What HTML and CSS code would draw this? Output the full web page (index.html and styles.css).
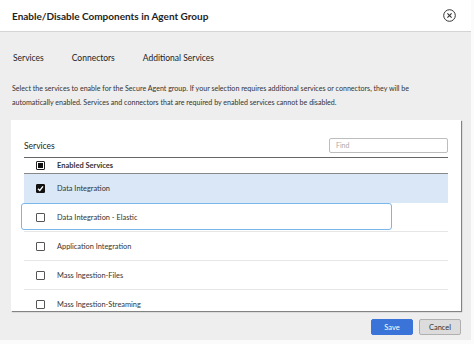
FILE: index.html
```html
<html>
	<head>
		<title>Enable/Disable Components</title>
		<link rel="stylesheet" href="styles.css">
	</head>
	<body>
		<div class="Dialog">
			<div class="Header">
				<span class="Title">Enable/Disable Components in Agent Group</span>
				<svg class="Close" width="13" height="13" viewBox="0 0 13 13">
					<circle cx="6.5" cy="6.5" r="5.8" fill="none" stroke="#333" stroke-width="1"/>
					<path d="M4.4 4.4 L8.6 8.6 M8.6 4.4 L4.4 8.6" stroke="#333" stroke-width="1.1"/>
				</svg>
			</div>

			<div class="Tabs">
				<span class="Tab">Services</span>
				<span class="Tab">Connectors</span>
				<span class="Tab">Additional Services</span>
			</div>

			<div class="Desc">
				Select the services to enable for the Secure Agent group. If your selection requires additional services or connectors, they will be
				automatically enabled. Services and connectors that are required by enabled services cannot be disabled.
			</div>

			<div class="Panel">
				<div class="Toolbar">
					<span class="Label">Services</span>
					<div class="Find">Find</div>
				</div>
				<div class="HeadRow">
					<span class="Check Partial"></span>
					<span>Enabled Services</span>
				</div>
				<div class="Row Selected">
					<span class="Check On">
						<svg width="7" height="7" viewBox="0 0 7 7"><path d="M1 3.8 L2.8 5.5 L6 1.4" fill="none" stroke="#fff" stroke-width="1.4"/></svg>
					</span>
					<span>Data Integration</span>
				</div>
				<div class="Row Focus">
					<span class="Check"></span>
					<span>Data Integration - Elastic</span>
				</div>
				<div class="Row">
					<span class="Check"></span>
					<span>Application Integration</span>
				</div>
				<div class="Row">
					<span class="Check"></span>
					<span>Mass Ingestion-Files</span>
				</div>
				<div class="Row">
					<span class="Check"></span>
					<span>Mass Ingestion-Streaming</span>
				</div>
			</div>

			<div class="Footer">
				<button class="Btn Save">Save</button>
				<button class="Btn Cancel">Cancel</button>
			</div>
		</div>
	</body>
</html>
```

FILE: styles.css
```css
html, body {margin: 0; height: 100%; overflow: hidden; background-color: #fbfbfb;}
body { font-family: Lato, "Liberation Sans", sans-serif; color: #222; }

.Dialog {
	width: 471px;
	height: 340px;
	background-color: #eeeeee;
	display: flex;
	flex-direction: column;
}

.Header {
	height: 31px;
	background-color: white;
	border-bottom: 1px solid #d4d4d4;
	display: flex;
	align-items: center;
	justify-content: space-between;
	padding: 0 15px 0 12px;
}
.Title {
	font-weight: bold;
	font-size: 10px;
	color: #1e1e1e;
}
.Close { display: block; }

.Tabs {
	display: flex;
	gap: 28px;
	padding: 18px 0 0 13px;
	height: 16px;
	font-size: 8.5px;
	line-height: 16px;
}

.Desc {
	padding: 16px 40px 0 12px;
	font-size: 7.1px;
	line-height: 14px;
	color: #333;
}

.Panel {
	margin: 10px 0 0 11px;
	width: 424px;
	height: 191px;
	padding: 0 13px;
	background-color: white;
	box-shadow: 1px 1px 1px rgba(0, 0, 0, 0.45);
	overflow: hidden;
}

.Toolbar {
	display: flex;
	justify-content: space-between;
	align-items: center;
	padding-top: 18px;
	height: 15px;
	margin-bottom: 4px;
}
.Label { font-size: 8.5px; }
.Find {
	width: 111px;
	height: 13px;
	border: 1px solid #bdbdbd;
	border-radius: 2px;
	font-size: 7px;
	line-height: 13px;
	color: #aaa;
	padding-left: 6px;
}

.HeadRow {
	border-top: 1px solid #666;
	border-bottom: 1px solid #888;
	height: 15px;
	display: flex;
	align-items: center;
	font-size: 7.5px;
	font-weight: bold;
	color: #333;
}

.Row {
	position: relative;
	height: 28px;
	border-bottom: 1px solid #e6e6e6;
	display: flex;
	align-items: center;
	font-size: 7.4px;
	color: #333;
}
.Row.Selected {
	background-color: #d9e7f7;
	border-bottom-color: #d9e7f7;
}
.Row.Focus::before {
	content: "";
	position: absolute;
	left: -3px;
	top: 0;
	width: 369px;
	height: 25px;
	border: 1px solid #79b6ea;
	border-radius: 3px;
}

.Check {
	width: 7px;
	height: 7px;
	border: 1px solid #555;
	border-radius: 1px;
	margin: 0 12px 0 12px;
	display: flex;
	align-items: center;
	justify-content: center;
	flex-shrink: 0;
}
.Check.On { background-color: #111; border-color: #111; }
.Check.Partial { border-color: #222; }
.Check.Partial::after {
	content: "";
	width: 5px;
	height: 5px;
	background-color: #111;
}

.Footer {
	display: flex;
	justify-content: flex-end;
	gap: 6px;
	padding: 8px 10px 0 0;
}
.Btn {
	width: 42px;
	height: 16px;
	font-family: Lato, "Liberation Sans", sans-serif;
	font-size: 7.5px;
	border-radius: 2px;
	padding: 0;
}
.Save {
	background-color: #3a74d9;
	border: 1px solid #3a74d9;
	color: white;
}
.Cancel {
	background-color: #dcdcdc;
	border: 1px solid #b0b0b0;
	color: #333;
}
```
